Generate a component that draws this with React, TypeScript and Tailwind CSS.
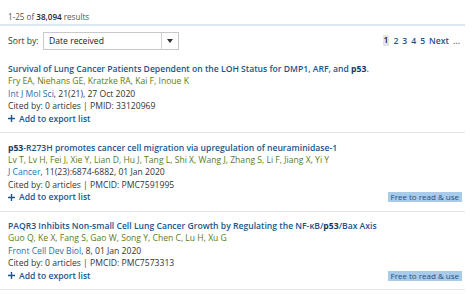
import React from "react";

type Entry = {
  title: React.ReactNode;
  authors: string;
  journal: string;
  rest: string;
  cited: string;
  free: boolean;
};

const P53 = () => <span className="font-bold text-[#0c3a66]">p53</span>;

const entries: Entry[] = [
  {
    title: (
      <>
        Survival of Lung Cancer Patients Dependent on the LOH Status for DMP1, ARF, and <P53 />.
      </>
    ),
    authors: "Fry EA, Niehans GE, Kratzke RA, Kai F, Inoue K",
    journal: "Int J Mol Sci",
    rest: ", 21(21), 27 Oct 2020",
    cited: "Cited by: 0 articles | PMID: 33120969",
    free: false,
  },
  {
    title: (
      <>
        <P53 />-R273H promotes cancer cell migration via upregulation of neuraminidase-1
      </>
    ),
    authors: "Lv T, Lv H, Fei J, Xie Y, Lian D, Hu J, Tang L, Shi X, Wang J, Zhang S, Li F, Jiang X, Yi Y",
    journal: "J Cancer",
    rest: ", 11(23):6874-6882, 01 Jan 2020",
    cited: "Cited by: 0 articles | PMCID: PMC7591995",
    free: true,
  },
  {
    title: (
      <>
        PAQR3 Inhibits Non-small Cell Lung Cancer Growth by Regulating the NF-κB/<P53 />/Bax Axis
      </>
    ),
    authors: "Guo Q, Ke X, Fang S, Gao W, Song Y, Chen C, Lu H, Xu G",
    journal: "Front Cell Dev Biol",
    rest: ", 8, 01 Jan 2020",
    cited: "Cited by: 0 articles | PMCID: PMC7573313",
    free: true,
  },
];

export default function App() {
  return (
    <div
      className="w-[474px] h-[294px] overflow-hidden bg-white text-[8.6px] text-[#333]"
      style={{ fontFamily: '"Open Sans", "Liberation Sans", sans-serif' }}
    >
      <div className="w-[465px]">
        <div className="pl-[8px] pt-[11px] text-[8.1px] leading-[12px] text-[#555]">
          1-25 of <span className="font-semibold text-[#222]">38,094</span> results
        </div>
        <div className="mt-[1px] h-[2px] bg-[#dbe7f3]" />
        <div className="flex items-center justify-between pl-[8px] pt-[6px]">
          <div className="flex items-center">
            <span className="w-[35px] text-[#333]">Sort by:</span>
            <div className="flex h-[18px] w-[136px] items-center border border-[#c8c8c8] bg-white">
              <span className="flex-1 pl-[5px] text-[#222]">Date received</span>
              <div className="flex h-full w-[17px] items-center justify-center border-l border-[#d4d4d4]">
                <svg width="6" height="4" viewBox="0 0 6 4">
                  <path d="M0 0 L6 0 L3 4 Z" fill="#333" />
                </svg>
              </div>
            </div>
          </div>
          <div className="mr-[5px] flex items-center gap-[4px] font-semibold text-[#20558a]">
            <span className="bg-[#e1e6ec] px-[1px] leading-[11px] text-[#222]">1</span>
            <span>2</span>
            <span>3</span>
            <span>4</span>
            <span>5</span>
            <span>Next</span>
            <span className="text-[#666]">...</span>
          </div>
        </div>
        <div className="mt-[13px]">
          {entries.map((e, i) => (
            <div
              key={i}
              className={`pl-[8px] pb-[7px] leading-[12.4px] border-b border-[#e3e3e3] ${i === 0 ? "pt-0" : "pt-[8.5px]"}`}
            >
              <div className="font-semibold text-[#20558a] whitespace-nowrap">{e.title}</div>
              <div className="text-[#5a7d12] whitespace-nowrap">{e.authors}</div>
              <div className="whitespace-nowrap">
                <span className="text-[#2a6fb0]">{e.journal}</span>
                <span className="text-[#333]">{e.rest}</span>
              </div>
              <div className="text-[#333]">{e.cited}</div>
              <div className="flex items-center justify-between">
                <div className="flex items-center gap-[4px] font-semibold text-[#20558a]">
                  <svg width="7" height="7" viewBox="0 0 7 7">
                    <path d="M3.5 0 V7 M0 3.5 H7" stroke="#20558a" strokeWidth="1.4" />
                  </svg>
                  <span>Add to export list</span>
                </div>
                {e.free && (
                  <span className="mr-[3px] bg-[#a8cbea] px-[3px] text-[8px] leading-[10px] text-[#1d4f80]">
                    Free to read &amp; use
                  </span>
                )}
              </div>
            </div>
          ))}
        </div>
      </div>
    </div>
  );
}
